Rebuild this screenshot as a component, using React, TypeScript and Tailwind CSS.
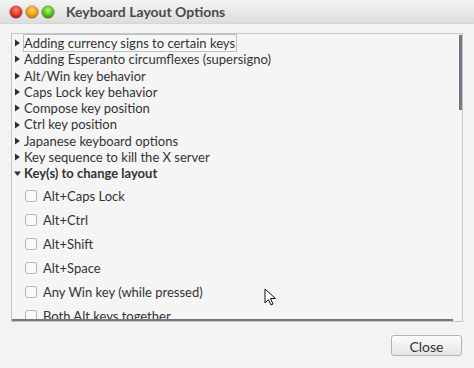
import React from 'react';

const collapsed = [
    'Adding currency signs to certain keys',
    'Adding Esperanto circumflexes (supersigno)',
    'Alt/Win key behavior',
    'Caps Lock key behavior',
    'Compose key position',
    'Ctrl key position',
    'Japanese keyboard options',
    'Key sequence to kill the X server',
];

const options = ['Alt+Caps Lock', 'Alt+Ctrl', 'Alt+Shift', 'Alt+Space', 'Any Win key (while pressed)', 'Both Alt keys together'];

function Light({ id, hi, mid, lo }: { id: string; hi: string; mid: string; lo: string }) {
    return (
        <svg width="14" height="14" viewBox="0 0 14 14">
            <defs>
                <radialGradient id={id} cx="50%" cy="35%" r="65%">
                    <stop offset="0%" stopColor={hi} />
                    <stop offset="60%" stopColor={mid} />
                    <stop offset="100%" stopColor={lo} />
                </radialGradient>
            </defs>
            <circle cx="7" cy="7" r="6.3" fill={`url(#${id})`} stroke="#8a8a8a" strokeWidth="0.6" />
        </svg>
    );
}

function Arrow({ open }: { open?: boolean }) {
    return open ? (
        <svg width="7" height="7" viewBox="0 0 7 7" className="shrink-0">
            <path d="M0 1.5 L7 1.5 L3.5 6 Z" fill="#2e2e2e" />
        </svg>
    ) : (
        <svg width="7" height="8" viewBox="0 0 7 8" className="shrink-0">
            <path d="M1 0.5 L6 4 L1 7.5 Z" fill="#2e2e2e" />
        </svg>
    );
}

export default function App() {
    return (
        <div
            className="flex h-[368px] w-[474px] flex-col overflow-hidden bg-[#f3f3f3] text-[#333333]"
            style={{ fontFamily: 'Lato, "Open Sans", sans-serif' }}
        >
            {/* title bar */}
            <div className="flex h-[24px] shrink-0 items-center border-b border-[#d6d6d6] bg-gradient-to-b from-[#f4f4f4] to-[#dddddd] pl-[9px]">
                <div className="flex gap-[2px]">
                    <Light id="r" hi="#ff8a7a" mid="#e5352a" lo="#a8160f" />
                    <Light id="o" hi="#ffd27a" mid="#f5a012" lo="#b86d00" />
                    <Light id="g" hi="#b6f27a" mid="#5dc21e" lo="#2f7d0c" />
                </div>
                <div className="ml-[11px] text-[14px] font-bold text-[#4a4a4a]">Keyboard Layout Options</div>
            </div>

            {/* list frame */}
            <div className="mx-[11px] mt-[9px] flex h-[289px] flex-col border border-[#c6c6c6] bg-[#f5f5f5]">
                <div className="flex min-h-0 flex-1">
                    <div className="flex-1 overflow-hidden pl-[2px] pt-[1px] text-[13px] leading-[16.3px]">
                        {collapsed.map((label, i) => (
                            <div key={label} className="flex h-[16.3px] items-center gap-[2px]">
                                <Arrow />
                                <span className={i === 0 ? 'border border-[#b8c0c8] bg-[#f7f7f7] pr-[1px]' : 'border border-transparent'}>
                                    {label}
                                </span>
                            </div>
                        ))}
                        <div className="flex h-[16.3px] items-center gap-[2px]">
                            <Arrow open />
                            <span className="border border-transparent font-bold">Key(s) to change layout</span>
                        </div>
                        <div className="mt-[2px] flex flex-col">
                            {options.map((label) => (
                                <div key={label} className="flex h-[24px] items-center gap-[6px] pl-[11px]">
                                    <span className="h-[12px] w-[12px] rounded-[3px] border border-[#b4b4b4] bg-[#fafafa]" />
                                    <span>{label}</span>
                                </div>
                            ))}
                        </div>
                    </div>
                    <div className="flex w-[4px] justify-center">
                        <div className="mt-[1px] h-[75px] w-[3px] bg-[#6f7883]" />
                    </div>
                </div>
                <div className="h-[2px] w-[441px] shrink-0 bg-[#6f7883]" />
            </div>

            {/* buttons */}
            <div className="mt-[13px] flex justify-end pr-[12px]">
                <button className="h-[21px] w-[71px] rounded-[3px] border border-[#b3b3b3] bg-gradient-to-b from-[#fbfbfb] to-[#e6e6e6] text-[14px] text-[#333333]">
                    Close
                </button>
            </div>

            {/* mouse pointer over the dialog */}
            <svg width="13" height="19" viewBox="0 0 13 19" className="absolute left-[264px] top-[288px]">
                <path d="M1 1 L1 15 L4.5 11.5 L7 17 L9 16 L6.5 10.5 L11.5 10.5 Z" fill="#fff" stroke="#111" strokeWidth="1" strokeLinejoin="round" />
            </svg>
        </div>
    );
}
